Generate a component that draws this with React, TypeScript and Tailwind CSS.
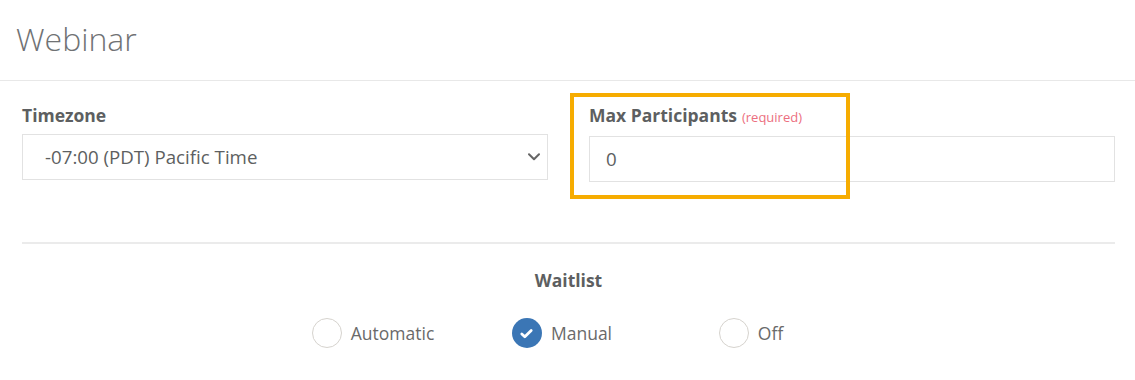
import React from "react";

const options = [
  { label: "Automatic", checked: false },
  { label: "Manual", checked: true },
  { label: "Off", checked: false },
];

function Radio({ label, checked }: { label: string; checked: boolean }) {
  return (
    <div className="flex w-[189px] justify-center">
      <label className="flex items-center gap-[9px]">
        {checked ? (
          <span className="flex h-[30px] w-[30px] items-center justify-center rounded-full bg-[#3b76b5]">
            <svg viewBox="0 0 16 16" className="h-[15px] w-[15px]" aria-hidden="true">
              <path
                d="M3 8.5l3.2 3L13 4.8"
                fill="none"
                stroke="white"
                strokeWidth="3"
                strokeLinecap="round"
                strokeLinejoin="round"
              />
            </svg>
          </span>
        ) : (
          <span className="h-[30px] w-[30px] rounded-full border border-[#d6d3ce] bg-white" />
        )}
        <span className="text-[17.5px] text-[#6a6a6a]">{label}</span>
      </label>
    </div>
  );
}

export default function App() {
  return (
    <div className="h-[380px] w-[1135px] bg-white font-['Open_Sans',sans-serif]">
      <div className="flex h-[81px] items-center border-b border-[#e8e8e8] px-4 pb-[2px]">
        <h1 className="text-[32px] font-light text-[#707274]">Webinar</h1>
      </div>

      <div className="pl-[22px] pr-[20px]">
        <div className="relative grid grid-cols-2 gap-[41px] pt-[20px]">
          <div>
            <div className="mb-[5px] text-[17.5px] font-bold leading-[28px] text-[#5d5f61]">
              Timezone
            </div>
            <div className="flex h-[46px] items-center justify-between border border-[#e2e2e2] pl-[22px] pr-[7px]">
              <span className="text-[18.7px] text-[#5d5f61]">-07:00 (PDT) Pacific Time</span>
              <svg viewBox="0 0 12 8" className="h-[8px] w-[12px]" aria-hidden="true">
                <path
                  d="M1 1.2l5 5 5-5"
                  fill="none"
                  stroke="#666"
                  strokeWidth="2"
                  strokeLinecap="round"
                  strokeLinejoin="round"
                />
              </svg>
            </div>
          </div>

          <div>
            <div className="mb-[5px] flex items-baseline gap-[5px] leading-[28px]">
              <span className="text-[17.5px] font-bold text-[#5d5f61]">Max Participants</span>
              <span className="text-[13px] text-[#ec6f80]">(required)</span>
            </div>
            <div className="flex h-[46px] items-center border border-[#e2e2e2] pl-[16px]">
              <span className="text-[18.7px] text-[#5d5f61]">0</span>
            </div>
          </div>

          <div className="pointer-events-none absolute left-[548px] top-[12px] h-[106px] w-[280px] border-4 border-[#f6ac00]" />
        </div>

        <div className="mt-[60px] h-[2px] bg-[#ebebeb]" />

        <div className="pt-[23px] text-center text-[17.5px] font-bold text-[#5d5f61]">Waitlist</div>

        <div className="mt-[25px] flex justify-center pr-[13px]">
          {options.map((o) => (
            <Radio key={o.label} label={o.label} checked={o.checked} />
          ))}
        </div>
      </div>
    </div>
  );
}
